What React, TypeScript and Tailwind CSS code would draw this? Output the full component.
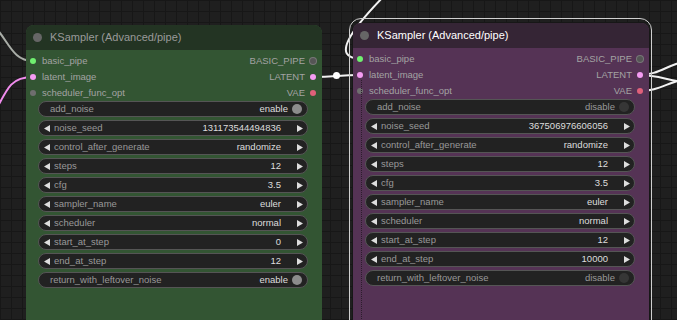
type Widget =
  | { kind: 'toggle'; name: string; on: boolean }
  | { kind: 'value'; name: string; value: string };

type Slot = { label: string; color: string };

const INPUTS: Slot[] = [
  { label: 'basic_pipe', color: 'bg-[#70f070]' },
  { label: 'latent_image', color: 'bg-[#f59cf2]' },
  { label: 'scheduler_func_opt', color: 'bg-[#6e6e6e]' }
];

const OUTPUTS: Slot[] = [
  { label: 'BASIC_PIPE', color: 'bg-[#555] ring-1 ring-[#777]' },
  { label: 'LATENT', color: 'bg-[#f59cf2]' },
  { label: 'VAE', color: 'bg-[#e0607a]' }
];

const LEFT: Widget[] = [
  { kind: 'toggle', name: 'add_noise', on: true },
  { kind: 'value', name: 'noise_seed', value: '131173544494836' },
  { kind: 'value', name: 'control_after_generate', value: 'randomize' },
  { kind: 'value', name: 'steps', value: '12' },
  { kind: 'value', name: 'cfg', value: '3.5' },
  { kind: 'value', name: 'sampler_name', value: 'euler' },
  { kind: 'value', name: 'scheduler', value: 'normal' },
  { kind: 'value', name: 'start_at_step', value: '0' },
  { kind: 'value', name: 'end_at_step', value: '12' },
  { kind: 'toggle', name: 'return_with_leftover_noise', on: true }
];

const RIGHT: Widget[] = [
  { kind: 'toggle', name: 'add_noise', on: false },
  { kind: 'value', name: 'noise_seed', value: '367506976606056' },
  { kind: 'value', name: 'control_after_generate', value: 'randomize' },
  { kind: 'value', name: 'steps', value: '12' },
  { kind: 'value', name: 'cfg', value: '3.5' },
  { kind: 'value', name: 'sampler_name', value: 'euler' },
  { kind: 'value', name: 'scheduler', value: 'normal' },
  { kind: 'value', name: 'start_at_step', value: '12' },
  { kind: 'value', name: 'end_at_step', value: '10000' },
  { kind: 'toggle', name: 'return_with_leftover_noise', on: false }
];

export default function App() {
  return (
    <div className="relative w-[677px] h-[320px] overflow-hidden bg-[#1f1f1f] bg-[linear-gradient(to_right,#171717_1px,transparent_1px),linear-gradient(to_bottom,#171717_1px,transparent_1px)] bg-[size:11px_11px] font-['Liberation_Sans',Arial,sans-serif]">
      <Wires />

      <Node
        className="left-[26px] top-[25px]"
        titleBg="bg-[#233423]"
        bodyBg="bg-[#335533]"
        widgets={LEFT}
      />

      <Node
        className="left-[353px] top-[23px]"
        titleBg="bg-[#352535]"
        bodyBg="bg-[#553355]"
        widgets={RIGHT}
        selected
      />

      {/* link midpoint */}
      <div className="absolute left-[333px] top-[72px] w-[7px] h-[7px] rounded-full bg-white" />
    </div>
  );
}

function Wires() {
  return (
    <svg className="absolute inset-0" width={677} height={320} fill="none">
      <path d="M -12 20 C 8 36, 10 61, 33 61" stroke="#a9ada7" strokeWidth={2} />
      <path d="M -6 114 C 8 86, 12 77, 33 77" stroke="#f08ced" strokeWidth={2} />
      <path d="M 313 77 C 337 77, 337 75, 361 75" stroke="#f2f2f2" strokeWidth={2} />
      <path d="M 390 -10 C 350 30, 330 58.7, 361 58.7" stroke="#f2f2f2" strokeWidth={2} />
      <path d="M 639 75 C 662 75, 668 62, 700 58" stroke="#f2f2f2" strokeWidth={2} />
      <path d="M 639 75 C 662 75, 668 82, 700 84" stroke="#f2f2f2" strokeWidth={2} />
      <path d="M 639 91 C 662 91, 668 80, 700 76" stroke="#f2f2f2" strokeWidth={2} />
    </svg>
  );
}

function Node({
  className,
  titleBg,
  bodyBg,
  widgets,
  selected = false
}: {
  className: string;
  titleBg: string;
  bodyBg: string;
  widgets: Widget[];
  selected?: boolean;
}) {
  return (
    <div className={`absolute w-[296px] h-[320px] ${className}`}>
      {selected && (
        <div className="absolute -left-[4px] -top-[5px] -right-[3px] bottom-0 rounded-[12px] border-[1.5px] border-[#cfcfcf]" />
      )}
      <div className={`relative h-full rounded-t-[8px] overflow-hidden ${bodyBg}`}>
        <div className={`h-[25px] flex items-center pl-[7px] ${titleBg}`}>
          <div className="w-[9px] h-[9px] rounded-full bg-[#666]" />
          <span
            className={`ml-[8px] text-[11px] leading-none ${
              selected ? 'text-white' : 'text-[#9a9a9a]'
            }`}
          >
            KSampler (Advanced/pipe)
          </span>
        </div>

        {selected && (
          <div className="absolute left-[8px] top-[57px] bottom-0 border-l border-dotted border-[#2c1d2c]" />
        )}

        <div className="pt-[3px]">
          {INPUTS.map((inp, i) => (
            <div key={inp.label} className="h-[16px] flex items-center justify-between pl-[4px] pr-[6px]">
              <div className="flex items-center gap-[6px]">
                <div className={`w-[6px] h-[6px] rounded-full ${inp.color}`} />
                <span className="text-[9.5px] leading-none text-[#a3a3a3]">{inp.label}</span>
              </div>
              <div className="flex items-center gap-[5px]">
                <span className="text-[9.5px] leading-none text-[#a3a3a3]">{OUTPUTS[i].label}</span>
                <div className={`w-[6px] h-[6px] rounded-full ${OUTPUTS[i].color}`} />
              </div>
            </div>
          ))}
        </div>

        <div className="flex flex-col gap-[3px] ml-[12px] mr-[14px]">
          {widgets.map((w) => (
            <WidgetRow key={w.name} w={w} />
          ))}
        </div>
      </div>
    </div>
  );
}

function Arrow({ dir }: { dir: 'left' | 'right' }) {
  return (
    <svg width={6} height={7} viewBox="0 0 6 7" className="shrink-0">
      <polygon points={dir === 'left' ? '6,0 6,7 0,3.5' : '0,0 0,7 6,3.5'} fill="#dedede" />
    </svg>
  );
}

function WidgetRow({ w }: { w: Widget }) {
  if (w.kind === 'toggle') {
    return (
      <div className="h-[16px] rounded-full border border-[#555] bg-[#222] flex items-center pl-[11px] pr-[5px] text-[9.5px] leading-none">
        <span className="text-[#999]">{w.name}</span>
        <span className={`ml-auto ${w.on ? 'text-[#ddd]' : 'text-[#999]'}`}>
          {w.on ? 'enable' : 'disable'}
        </span>
        <div
          className={`ml-[4px] w-[10px] h-[10px] rounded-full ${
            w.on ? 'bg-[#8c8c8c]' : 'bg-[#363636]'
          }`}
        />
      </div>
    );
  }
  return (
    <div className="h-[16px] rounded-full border border-[#555] bg-[#222] flex items-center pl-[5px] pr-[4px] text-[9.5px] leading-none">
      <Arrow dir="left" />
      <span className="ml-[4px] text-[#999]">{w.name}</span>
      <span className="ml-auto text-[#ddd]">{w.value}</span>
      <div className="ml-[16px]">
        <Arrow dir="right" />
      </div>
    </div>
  );
}
